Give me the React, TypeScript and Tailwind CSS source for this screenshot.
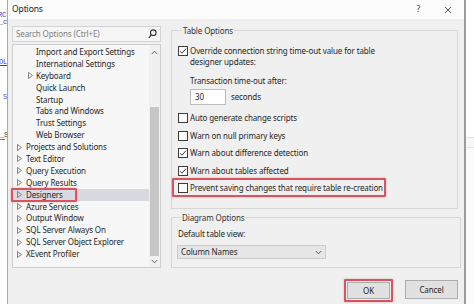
import React from "react";

function Tri() {
  return (
    <svg width="5" height="7" viewBox="0 0 5 7" className="block">
      <polygon points="0.5,0.5 4.5,3.5 0.5,6.5" fill="none" stroke="#777" strokeWidth="0.9" />
    </svg>
  );
}

type RowProps = { label: string; level: 1 | 2; arrow?: boolean; selected?: boolean };

function TreeRow({ label, level, arrow, selected }: RowProps) {
  return (
    <div className={selected ? "relative h-[11.9px] flex items-center bg-[#d9d9e1]" : "relative h-[11.9px] flex items-center"}>
      {level === 1 ? (
        <div className="w-[13px] pl-[4px] flex items-center">{arrow ? <Tri /> : null}</div>
      ) : (
        <div className="w-[23px] pl-[15px] flex items-center">{arrow ? <Tri /> : null}</div>
      )}
      <span className="whitespace-nowrap leading-none">{label}</span>
      {selected ? (
        <div className="absolute left-[-2px] top-[-1px] w-[66px] h-[14px] border-2 border-[#d9545f] rounded-[1px] shadow-[0_0_2px_rgba(217,84,95,0.5)]" />
      ) : null}
    </div>
  );
}

function Check({ checked }: { checked?: boolean }) {
  return (
    <div className="w-[10px] h-[10px] border border-[#3c3c3c] bg-[#fcfcfc] flex items-center justify-center shrink-0">
      {checked ? (
        <svg width="8" height="8" viewBox="0 0 8 8">
          <polyline points="1,4.2 3,6.2 7,1.6" fill="none" stroke="#3a3a3a" strokeWidth="1" />
        </svg>
      ) : null}
    </div>
  );
}

function CheckRow({ label, checked, highlight }: { label: string; checked?: boolean; highlight?: boolean }) {
  return (
    <div className="relative flex items-center gap-[2px] h-[12px]">
      <Check checked={checked} />
      <span className="whitespace-nowrap leading-none">{label}</span>
      {highlight ? (
        <div className="absolute left-[-6px] top-[-4px] w-[214px] h-[19px] border-2 border-[#d9545f] rounded-[1px] shadow-[0_0_2px_rgba(217,84,95,0.5)]" />
      ) : null}
    </div>
  );
}

function Chevron({ up }: { up?: boolean }) {
  return (
    <svg width="7" height="5" viewBox="0 0 7 5" className="block">
      <polyline
        points={up ? "0.8,4 3.5,1.2 6.2,4" : "0.8,1 3.5,3.8 6.2,1"}
        fill="none"
        stroke="#606060"
        strokeWidth="1"
      />
    </svg>
  );
}

export default function App() {
  const tree: RowProps[] = [
    { label: "Import and Export Settings", level: 2 },
    { label: "International Settings", level: 2 },
    { label: "Keyboard", level: 2, arrow: true },
    { label: "Quick Launch", level: 2 },
    { label: "Startup", level: 2 },
    { label: "Tabs and Windows", level: 2 },
    { label: "Trust Settings", level: 2 },
    { label: "Web Browser", level: 2 },
    { label: "Projects and Solutions", level: 1, arrow: true },
    { label: "Text Editor", level: 1, arrow: true },
    { label: "Query Execution", level: 1, arrow: true },
    { label: "Query Results", level: 1, arrow: true },
    { label: "Designers", level: 1, arrow: true, selected: true },
    { label: "Azure Services", level: 1, arrow: true },
    { label: "Output Window", level: 1, arrow: true },
    { label: "SQL Server Always On", level: 1, arrow: true },
    { label: "SQL Server Object Explorer", level: 1, arrow: true },
    { label: "XEvent Profiler", level: 1, arrow: true },
  ];

  return (
    <div className="w-[474px] h-[304px] flex overflow-hidden bg-white text-[8px] tracking-[-0.12px] text-[#262626] font-['Noto_Sans',sans-serif]">
      {/* background editor fragments */}
      <div className="w-[7px] shrink-0 overflow-hidden bg-white flex flex-col text-[7px] leading-[7px] font-['Liberation_Mono',monospace]">
        <div className="h-[12px] shrink-0" />
        <div className="h-[7px] shrink-0 overflow-hidden text-[#3636c8] ml-[-2px] whitespace-nowrap">RC</div>
        <div className="h-[7px] shrink-0 overflow-hidden text-[#444] ml-[-1px] whitespace-nowrap">_c</div>
        <div className="h-[33px] shrink-0" />
        <div className="h-[7px] shrink-0 overflow-hidden text-[#3636c8] ml-[-1px] whitespace-nowrap underline">OL</div>
        <div className="h-[28px] shrink-0" />
        <div className="h-[7px] shrink-0 overflow-hidden text-[#5a5ac8] ml-[3px] whitespace-nowrap">S</div>
        <div className="h-[31px] shrink-0" />
        <div className="h-[7px] shrink-0 overflow-hidden text-[#444] whitespace-nowrap">_S</div>
        <div className="h-[1px] w-[5px] shrink-0 bg-[#d05050]" />
      </div>

      {/* dialog */}
      <div className="w-[459px] shrink-0 flex flex-col border-l border-[#a8a8a8] border-r-2 border-r-[#9c9c9c] bg-[#f0f0f0]">
        {/* title bar */}
        <div className="h-[19px] bg-[#fcfcfc] flex items-center pl-[4px] pr-[12px]">
          <span className="text-[8.5px] text-[#222]">Options</span>
          <div className="flex-1" />
          <span className="text-[8.5px] text-[#444] mr-[24px]">?</span>
          <svg width="8" height="8" viewBox="0 0 8 8">
            <path d="M1 1 L7 7 M7 1 L1 7" stroke="#444" strokeWidth="0.9" />
          </svg>
        </div>

        {/* body */}
        <div className="flex-1 flex pl-[4px]">
          {/* left column */}
          <div className="w-[149px] shrink-0 flex flex-col">
            <div className="mt-[7px] h-[16px] border border-[#d4d4d4] bg-[#f6f6f6] flex items-center pl-[3px] pr-[3px]">
              <span className="text-[#808080] flex-1 whitespace-nowrap">Search Options (Ctrl+E)</span>
              <svg width="9" height="10" viewBox="0 0 9 10">
                <circle cx="5.3" cy="3.7" r="2.8" fill="none" stroke="#333" strokeWidth="1.1" />
                <path d="M3.3 5.8 L0.8 8.8" stroke="#333" strokeWidth="1.3" />
              </svg>
            </div>
            <div className="mt-[2px] h-[224px] border border-[#cfcfcf] bg-[#f7f7f7] flex">
              <div className="flex-1 flex flex-col pt-[1px]">
                {tree.map((r) => (
                  <TreeRow key={r.label} {...r} />
                ))}
              </div>
              <div className="w-[11px] flex flex-col bg-[#f0f0f0]">
                <div className="h-[14px] flex items-center justify-center">
                  <Chevron up />
                </div>
                <div className="flex-1 pt-[48px] px-[1px]">
                  <div className="h-[149px] bg-[#c6c6c6]" />
                </div>
                <div className="h-[11px] flex items-center justify-center">
                  <Chevron />
                </div>
              </div>
            </div>
          </div>

          {/* right column */}
          <div className="w-[287px] ml-[10px] flex flex-col">
            <fieldset className="mt-[6px] h-[184px] border border-[#d6d6d6] pl-[6px]">
              <legend className="ml-[4px] px-[1px] leading-[11px] text-[#333]">Table Options</legend>
              <div className="flex flex-col">
                <div className="flex items-start gap-[2px] mt-[9px]">
                  <div className="pt-[1px]">
                    <Check checked />
                  </div>
                  <div className="leading-[11px]">
                    Override connection string time-out value for table
                    <br />
                    designer updates:
                  </div>
                </div>
                <div className="ml-[12px] mt-[8px] leading-[11px]">Transaction time-out after:</div>
                <div className="ml-[12px] mt-[3px] flex items-center gap-[5px]">
                  <div className="w-[36px] h-[16px] border border-[#bdbdbd] bg-white flex items-center pl-[4px]">30</div>
                  <span>seconds</span>
                </div>
                <div className="mt-[7px] flex flex-col gap-[5.5px]">
                  <CheckRow label="Auto generate change scripts" />
                  <CheckRow label="Warn on null primary keys" />
                  <CheckRow label="Warn about difference detection" checked />
                  <CheckRow label="Warn about tables affected" checked />
                  <CheckRow label="Prevent saving changes that require table re-creation" highlight />
                </div>
              </div>
            </fieldset>
            <fieldset className="mt-[3px] h-[56px] border border-[#d6d6d6] pl-[5px] mr-[-3px]">
              <legend className="ml-[4px] px-[1px] leading-[11px] text-[#333]">Diagram Options</legend>
              <div className="leading-[11px] mt-[5px] ml-[1px]">Default table view:</div>
              <div className="mt-[6px] w-[149px] h-[14px] border border-[#cccccc] bg-[#e6e6e6] flex items-center pl-[3px] pr-[3px]">
                <span className="flex-1">Column Names</span>
                <Chevron />
              </div>
            </fieldset>
            <div className="mt-[11px] flex justify-end gap-[12px] pr-[0px]">
              <div className="w-[49px] h-[23px] border-2 border-[#d9545f] rounded-[1px] shadow-[0_0_2px_rgba(217,84,95,0.5)] p-[1px]">
                <div className="w-full h-full bg-[#e1e1e1] border border-[#adadad] flex items-center justify-center text-[#222]">OK</div>
              </div>
              <div className="mt-[1px] w-[53px] h-[19px] bg-[#e1e1e1] border border-[#adadad] flex items-center justify-center text-[#222]">Cancel</div>
            </div>
          </div>
        </div>
      </div>

      {/* background right */}
      <div className="flex-1 bg-white flex flex-col">
        <div className="h-[137px]" />
        <div className="h-[1px] bg-[#e2e2e2]" />
        <div className="h-[9px] bg-[#f7f7f7]" />
        <div className="h-[1px] bg-[#e6e6e6]" />
        <div className="flex-1 bg-[#fafafa]" />
      </div>
    </div>
  );
}
